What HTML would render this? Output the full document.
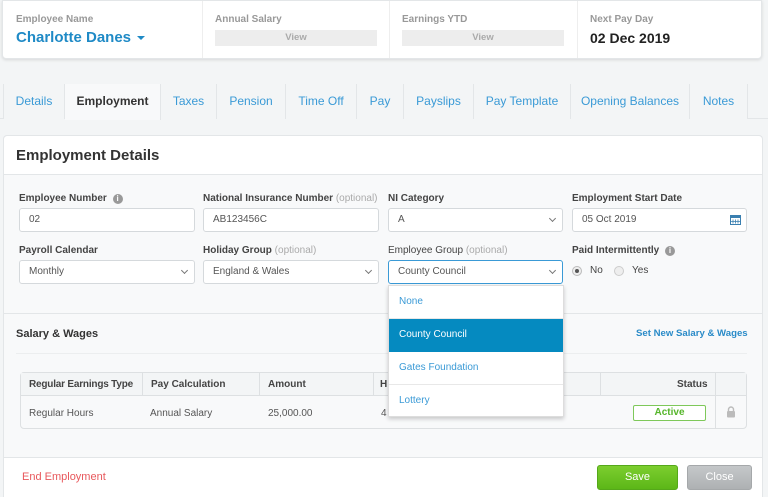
<!DOCTYPE html>
<html><head><style>
*{box-sizing:border-box;margin:0;padding:0}
html,body{width:768px;height:497px;overflow:hidden}
body{background:#f3f5f6;font-family:"Liberation Sans",Arial,sans-serif;position:relative;color:#333}
.abs{position:absolute}
.top{left:2px;top:0;width:760px;height:59px;background:#fff;border:1px solid #e3e6e8;border-radius:0 0 4px 4px;box-shadow:0 1px 3px rgba(0,0,0,.12)}
.lbl{font-size:10px;color:#999;font-weight:bold}
.view{background:#ededed;color:#aaa;font-size:9.5px;font-weight:bold;text-align:center;height:16px;line-height:16px}
.tabs{left:3px;top:84px;height:35px;width:745px;border-top:1px solid #e3e6e8}
.tab{position:absolute;top:84px;height:35px;border-right:1px solid #e3e6e8;background:#f3f5f6;color:#3a9ad6;font-size:12px;text-align:center;line-height:34px}
.tab.act{background:#f8f9fa;color:#333;font-weight:bold;height:36px}
.card{left:3px;top:135px;width:760px;height:362px;background:#f8f9fa;border:1px solid #e3e6e8;border-bottom:none;border-radius:4px 4px 0 0}
.fl{font-size:10px;font-weight:bold;color:#444}
.fl span{color:#aaa;font-weight:normal}
.inp{position:absolute;height:24px;background:#fff;border:1px solid #d5d9dc;border-radius:3px;font-size:10px;color:#555;padding-left:9px;line-height:22px}
.chev{position:absolute;right:7px;top:7px;width:5px;height:5px;border-right:1.2px solid #777;border-bottom:1.2px solid #777;transform:rotate(45deg)}
.th{font-size:10px;font-weight:bold;color:#444;top:379px}
.td{font-size:10px;color:#555;top:408px}
.dd{left:388px;top:285px;width:176px;height:132px;background:#fff;box-shadow:0 2px 4px rgba(0,0,0,.2);border:1px solid #ddd}
.di{height:33px;line-height:32px;padding-left:10px;font-size:10px;color:#3a9ad6;border-bottom:1px solid #e8e8e8}
</style></head><body>
<div class="abs top"></div>
<div class="abs" style="left:202px;top:1px;width:1px;height:57px;background:#eee"></div>
<div class="abs" style="left:389px;top:1px;width:1px;height:57px;background:#eee"></div>
<div class="abs" style="left:577px;top:1px;width:1px;height:57px;background:#eee"></div>
<div class="abs lbl" style="left:16px;top:14px">Employee Name</div>
<div class="abs" style="left:16px;top:29px;font-size:15px;font-weight:bold;color:#1f8ac6">Charlotte Danes</div>
<div class="abs" style="left:137px;top:36px;width:0;height:0;border-left:4px solid transparent;border-right:4px solid transparent;border-top:4px solid #1f8ac6"></div>
<div class="abs lbl" style="left:215px;top:14px">Annual Salary</div>
<div class="abs view" style="left:215px;top:30px;width:162px">View</div>
<div class="abs lbl" style="left:402px;top:14px">Earnings YTD</div>
<div class="abs view" style="left:402px;top:30px;width:162px">View</div>
<div class="abs lbl" style="left:590px;top:14px">Next Pay Day</div>
<div class="abs" style="left:590px;top:30px;font-size:14px;font-weight:bold;color:#222">02 Dec 2019</div>

<div class="abs tabs"></div>
<div class="abs" style="left:0;top:118px;width:768px;height:1px;background:#e3e6e8"></div>
<div class="tab" style="left:3px;width:62px;border-left:1px solid #e3e6e8">Details</div>
<div class="tab act" style="left:65px;width:96px">Employment</div>
<div class="tab" style="left:161px;width:56px">Taxes</div>
<div class="tab" style="left:217px;width:69px">Pension</div>
<div class="tab" style="left:286px;width:71px">Time Off</div>
<div class="tab" style="left:357px;width:47px">Pay</div>
<div class="tab" style="left:404px;width:70px">Payslips</div>
<div class="tab" style="left:474px;width:97px">Pay Template</div>
<div class="tab" style="left:571px;width:119px">Opening Balances</div>
<div class="tab" style="left:690px;width:58px">Notes</div>

<div class="abs card"></div>
<div class="abs" style="left:4px;top:136px;width:758px;height:39px;background:#fff;border-bottom:1px solid #e3e6e8;border-radius:4px 4px 0 0"></div>
<div class="abs" style="left:16px;top:147px;font-size:15px;font-weight:bold;color:#333">Employment Details</div>

<div class="abs fl" style="left:19px;top:193px">Employee Number <span style="display:inline-block;width:10px;height:10px;border-radius:50%;background:#999;color:#fff;font-size:8px;text-align:center;line-height:10px;font-weight:bold;margin-left:3px">i</span></div>
<div class="inp" style="left:19px;top:208px;width:176px">02</div>
<div class="abs fl" style="left:203px;top:193px">National Insurance Number <span>(optional)</span></div>
<div class="inp" style="left:203px;top:208px;width:176px">AB123456C</div>
<div class="abs fl" style="left:388px;top:193px">NI Category</div>
<div class="inp" style="left:388px;top:208px;width:175px">A<i class="chev"></i></div>
<div class="abs fl" style="left:572px;top:193px">Employment Start Date</div>
<div class="inp" style="left:572px;top:208px;width:175px">05 Oct 2019<svg style="position:absolute;right:5px;top:5px" width="11" height="11" viewBox="0 0 11 11"><rect x="0.5" y="1.5" width="10" height="9" fill="none" stroke="#3a7fb0"/><rect x="0.5" y="1.5" width="10" height="2.5" fill="#3a7fb0"/><path d="M3 5.5v4M5.5 5.5v4M8 5.5v4M1 7.5h9" stroke="#3a7fb0" stroke-width=".8"/></svg></div>

<div class="abs fl" style="left:19px;top:245px">Payroll Calendar</div>
<div class="inp" style="left:19px;top:260px;width:176px">Monthly<i class="chev"></i></div>
<div class="abs fl" style="left:203px;top:245px">Holiday Group <span>(optional)</span></div>
<div class="inp" style="left:203px;top:260px;width:176px">England &amp; Wales<i class="chev"></i></div>
<div class="abs fl" style="left:388px;top:245px;font-weight:normal;color:#444">Employee Group <span>(optional)</span></div>
<div class="inp" style="left:388px;top:260px;width:175px;border-color:#3a9ad6">County Council<i class="chev"></i></div>
<div class="abs fl" style="left:572px;top:245px">Paid Intermittently <span style="display:inline-block;width:10px;height:10px;border-radius:50%;background:#999;color:#fff;font-size:8px;text-align:center;line-height:10px;font-weight:bold;margin-left:3px">i</span></div>
<div class="abs" style="left:572px;top:266px;width:10px;height:10px;border-radius:50%;border:1px solid #bbb;background:#eee"><div style="width:4px;height:4px;border-radius:50%;background:#555;margin:2px"></div></div>
<div class="abs" style="left:590px;top:265px;font-size:10px;color:#444">No</div>
<div class="abs" style="left:614px;top:266px;width:10px;height:10px;border-radius:50%;border:1px solid #ccc;background:#eee"></div>
<div class="abs" style="left:632px;top:265px;font-size:10px;color:#444">Yes</div>

<div class="abs" style="left:4px;top:313px;width:758px;height:1px;background:#e3e6e8"></div>
<div class="abs" style="left:16px;top:328px;font-size:11px;font-weight:bold;color:#333">Salary &amp; Wages</div>
<div class="abs" style="left:636px;top:328px;font-size:9.6px;font-weight:bold;color:#2a8bc8">Set New Salary &amp; Wages</div>
<div class="abs" style="left:16px;top:353px;width:731px;height:1px;background:#eceeef"></div>

<div class="abs" style="left:20px;top:372px;width:727px;height:57px;border:1px solid #dde0e2;border-radius:4px;background:#f8f9fa"></div>
<div class="abs" style="left:21px;top:373px;width:725px;height:23px;background:#f3f5f6;border-bottom:1px solid #dde0e2"></div>
<div class="abs" style="left:142px;top:373px;width:1px;height:23px;background:#dde0e2"></div>
<div class="abs" style="left:259px;top:373px;width:1px;height:23px;background:#dde0e2"></div>
<div class="abs" style="left:373px;top:373px;width:1px;height:23px;background:#dde0e2"></div>
<div class="abs" style="left:600px;top:373px;width:1px;height:23px;background:#dde0e2"></div>
<div class="abs" style="left:715px;top:373px;width:1px;height:55px;background:#dde0e2"></div>
<div class="abs th" style="left:29px;letter-spacing:-.2px">Regular Earnings Type</div>
<div class="abs th" style="left:151px">Pay Calculation</div>
<div class="abs th" style="left:268px">Amount</div>
<div class="abs th" style="left:380px">H</div>
<div class="abs th" style="left:677px">Status</div>
<div class="abs td" style="left:29px">Regular Hours</div>
<div class="abs td" style="left:150px">Annual Salary</div>
<div class="abs td" style="left:268px">25,000.00</div>
<div class="abs td" style="left:381px">4</div>
<div class="abs" style="left:633px;top:405px;width:73px;height:16px;border:1px solid #7ec85a;border-radius:2px;background:#fff;color:#55b52a;font-size:10px;font-weight:bold;text-align:center;line-height:14px">Active</div>
<svg class="abs" style="left:726px;top:406px" width="10" height="12" viewBox="0 0 10 12"><path d="M2.5 5V3.5a2.5 2.5 0 0 1 5 0V5" fill="none" stroke="#bbb" stroke-width="1.4"/><rect x="1" y="5" width="8" height="6.5" rx="1" fill="#bbb"/></svg>

<div class="abs dd">
<div class="di">None</div>
<div class="di" style="background:#058ac0;color:#fff;border-bottom:none">County Council</div>
<div class="di">Gates Foundation</div>
<div class="di" style="border-bottom:none">Lottery</div>
</div>

<div class="abs" style="left:4px;top:457px;width:758px;height:40px;background:#fff;border-top:1px solid #e3e6e8"></div>
<div class="abs" style="left:22px;top:471px;font-size:11px;color:#e8585c">End Employment</div>
<div class="abs" style="left:597px;top:465px;width:81px;height:25px;background:linear-gradient(#7cce2e,#5cb718);border:1px solid #55a81a;border-radius:3px;color:#fff;font-size:11px;text-align:center;line-height:23px">Save</div>
<div class="abs" style="left:687px;top:465px;width:65px;height:25px;background:linear-gradient(#c4c7c9,#aeb1b3);border:1px solid #a5a8aa;border-radius:3px;color:#fff;font-size:11px;text-align:center;line-height:23px">Close</div>
</body></html>
